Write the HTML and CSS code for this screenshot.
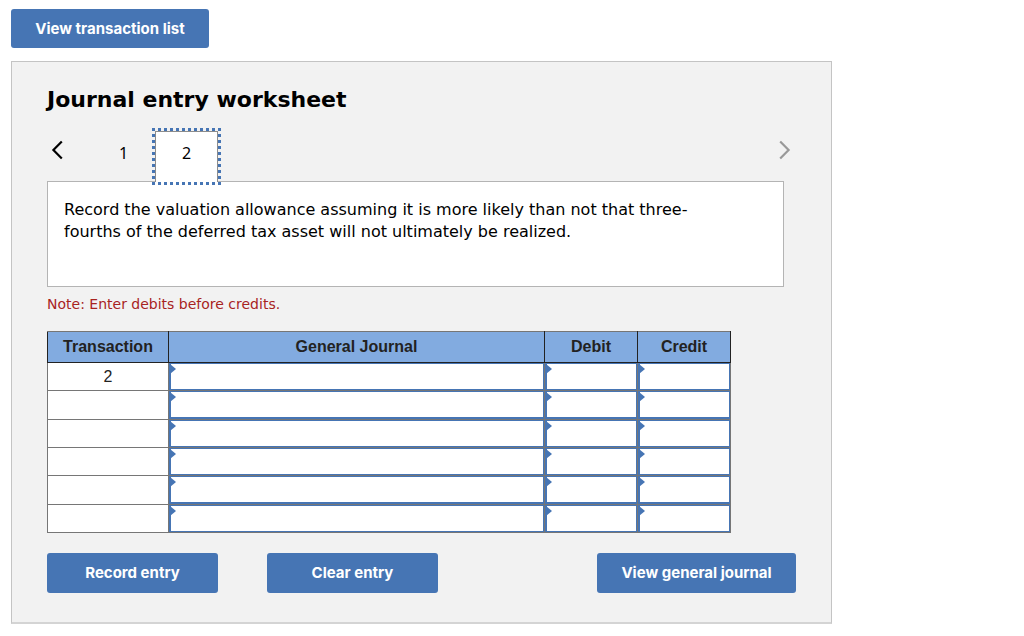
FILE: index.html
```html
<!DOCTYPE html>
<html lang="en">
<head>
    <meta charset="UTF-8">
    <meta name="viewport" content="width=device-width, initial-scale=1.0">
    <title>Journal entry worksheet</title>
    <link rel="stylesheet" href="styles.css">
</head>
<body>
    <button type="button" class="btn btn-list">View transaction list</button>

    <main class="worksheet">
        <h1>Journal entry worksheet</h1>

        <nav class="pager">
            <button type="button" class="arrow" aria-label="Previous">
                <svg width="12" height="20" viewBox="0 0 12 20"><path d="M10.8 1.5 L2.4 10 L10.8 18.5" fill="none" stroke="#000" stroke-width="2.2"/></svg>
            </button>
            <button type="button" class="tab">1</button>
            <button type="button" class="tab active">2</button>
            <button type="button" class="arrow next" aria-label="Next">
                <svg width="12" height="20" viewBox="0 0 12 20"><path d="M1.2 1.5 L9.6 10 L1.2 18.5" fill="none" stroke="#999" stroke-width="2.2"/></svg>
            </button>
        </nav>

        <div class="description">
            <p>Record the valuation allowance assuming it is more likely than not that three-fourths of the deferred tax asset will not ultimately be realized.</p>
        </div>

        <p class="note">Note: Enter debits before credits.</p>

        <table class="journal">
            <thead>
                <tr>
                    <th class="col-transaction">Transaction</th>
                    <th>General Journal</th>
                    <th class="col-amount">Debit</th>
                    <th class="col-amount">Credit</th>
                </tr>
            </thead>
            <tbody id="entries"></tbody>
        </table>

        <div class="actions">
            <button type="button" class="btn">Record entry</button>
            <button type="button" class="btn" id="clear">Clear entry</button>
            <button type="button" class="btn btn-wide">View general journal</button>
        </div>
    </main>

    <script>
        const entries = document.getElementById('entries');

        // First row carries the transaction number
        for (let i = 1; i <= 6; i++) {
            entries.innerHTML += `
                <tr>
                    <td>${i === 1 ? '2' : ''}</td>
                    <td class="entry"><input type="text" aria-label="General Journal, row ${i}"></td>
                    <td class="entry"><input type="text" aria-label="Debit, row ${i}"></td>
                    <td class="entry"><input type="text" aria-label="Credit, row ${i}"></td>
                </tr>
            `;
        }

        document.getElementById('clear').addEventListener('click', () => {
            entries.querySelectorAll('input').forEach(input => input.value = '');
        });
    </script>
</body>
</html>
```

FILE: styles.css
```css
* {
    box-sizing: border-box;
}
body {
    font-family: Verdana, "DejaVu Sans", sans-serif;
    font-size: 16px;
    line-height: 22px;
    margin: 0;
    padding: 9px 11px;
    background-color: #fff;
    color: #000;
}
button {
    font: inherit;
    color: inherit;
    border: none;
    background: none;
    padding: 0;
    cursor: pointer;
}
.btn {
    display: block;
    width: 171px;
    height: 40px;
    border-radius: 3px;
    background-color: #4675b4;
    color: #fff;
    font-family: Inter, sans-serif;
    font-size: 15px;
    font-weight: 700;
}
.btn-list {
    width: 198px;
    height: 39px;
}
.btn-wide {
    width: 199px;
    margin-left: auto;
}
.worksheet {
    max-width: 821px;
    margin-top: 13px;
    padding: 24px 35px 29px;
    border: 1px solid #c4c4c4;
    border-bottom: 2px solid #d4d4d4;
    background-color: #f2f2f2;
}
h1 {
    margin: 0;
    font-size: 22px;
    line-height: 28px;
}
.pager {
    display: flex;
    align-items: flex-end;
    margin-top: 17px;
    font-family: "Noto Sans", sans-serif;
}
.arrow {
    display: flex;
    width: 45px;
    height: 20px;
    padding-left: 4px;
    margin-bottom: 21px;
}
.next {
    width: 17px;
    padding-left: 0;
    margin-left: auto;
}
.tab {
    width: 63px;
    height: 51px;
    padding-bottom: 9px;
    margin-bottom: -1px;
    border: 1px solid transparent;
    border-bottom: none;
}
.tab.active {
    position: relative;
    border-color: #8c8c8c;
    background-color: #fff;
    outline: 3px dotted #4675b4;
}
.description {
    max-width: 737px;
    min-height: 106px;
    padding: 17px 60px 17px 16px;
    border: 1px solid #b4b4b4;
    background-color: #fff;
}
.description p {
    margin: 0;
}
.note {
    margin: 6px 0 16px;
    font-size: 14px;
    color: #a8231f;
}
.journal {
    width: 100%;
    max-width: 684px;
    height: 202px;
    table-layout: fixed;
    border-collapse: collapse;
    font-family: Arial, "Liberation Sans", sans-serif;
    color: #222;
}
.journal th, .journal td {
    padding: 0;
    border: 1px solid #767676;
    text-align: center;
}
.journal th {
    height: 31px;
    border-color: #222;
    border-top-color: #767676;
    background-color: #82abe0;
}
.journal td {
    background-color: #fff;
}
/* the cell colour shows as a frame round the input */
.journal .entry {
    position: relative;
    padding: 1px 1px 1px 2px;
    background-color: #4675b4;
}
.col-transaction {
    width: 121px;
}
.col-amount {
    width: 93px;
}
/* corner marker */
.entry::before {
    content: "";
    position: absolute;
    top: 1px;
    left: 1px;
    border: 5px solid transparent;
    border-left: 6px solid #4675b4;
    border-right: none;
}
.entry input {
    display: block;
    width: 100%;
    height: 25px;
    padding: 0 8px;
    border: none;
    border-radius: 0;
    background-color: #fff;
    font: inherit;
}
.actions {
    display: flex;
    gap: 49px;
    margin-top: 20px;
}
```
